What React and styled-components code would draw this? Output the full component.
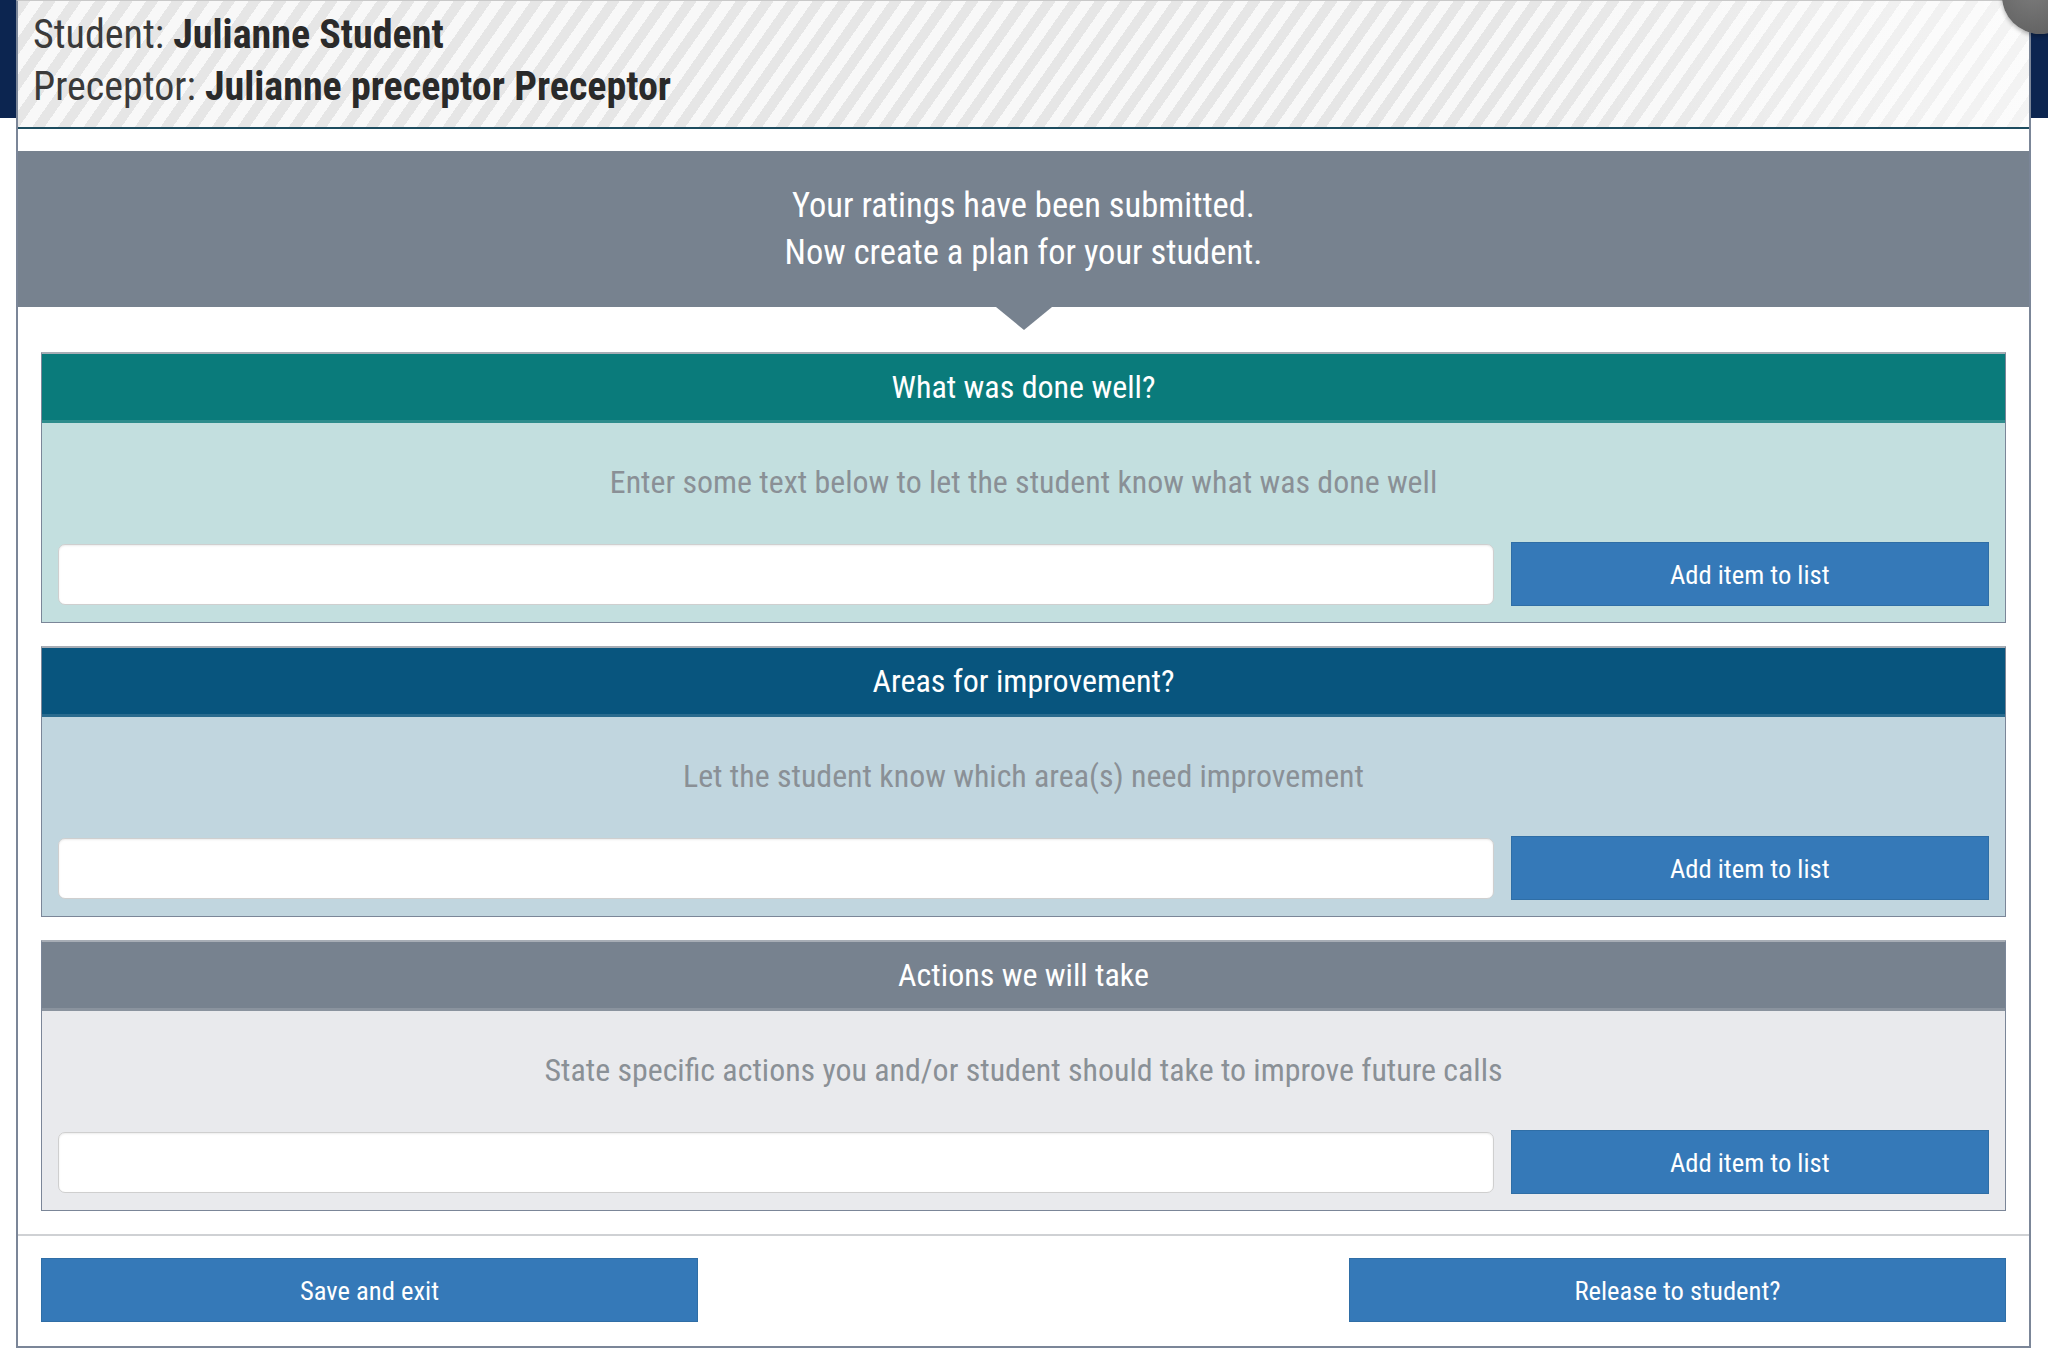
import styled, { createGlobalStyle } from "styled-components";

const GlobalStyle = createGlobalStyle`
  html, body {
    margin: 0;
    padding: 0;
  }
  body {
    min-height: 1348px;
    background: linear-gradient(#0c2550 0, #0c2550 118px, #ffffff 118px);
    font-family: "Roboto Condensed", "Liberation Sans Narrow", "DejaVu Sans Condensed", Roboto, sans-serif;
    font-stretch: condensed;
    overflow: hidden;
  }
`;

const Page = styled.div`
  position: relative;
  width: 2048px;
  height: 1348px;
  padding: 0 17px 0 16px;
  box-sizing: border-box;
`;

const CloseKnob = styled.div`
  position: absolute;
  top: -42px;
  right: -30px;
  width: 76px;
  height: 76px;
  border-radius: 50%;
  background: radial-gradient(circle at 40% 40%, #7c7c7c, #5a5a5a);
  box-shadow: 0 2px 4px rgba(0, 0, 0, 0.3);
`;

const Modal = styled.div`
  background: #fff;
  border: 2px solid #7b8698;
  border-top: 1px solid #c9c9c9;
  display: flex;
  flex-direction: column;
  height: 1348px;
  box-sizing: border-box;
`;

const Header = styled.div`
  height: 128px;
  box-sizing: border-box;
  padding: 8px 0 0 15px;
  border-bottom: 2px solid #1d4c5f;
  background:
    linear-gradient(to right, rgba(255, 255, 255, 0) 75%, rgba(255, 255, 255, 0.55) 100%),
    repeating-linear-gradient(
      125deg,
      #e6e6e6 0,
      #e6e6e6 10px,
      #f8f8f8 10px,
      #f8f8f8 21px
    );
  color: #3a3a3a;
  font-size: 40px;
  line-height: 52px;

  b {
    color: #2a2a2a;
    font-weight: 700;
  }
`;

const Body = styled.div`
  padding-top: 22px;
  display: flex;
  flex-direction: column;
`;

const Banner = styled.div`
  position: relative;
  height: 156px;
  background: #77828f;
  color: #fff;
  font-size: 34.5px;
  line-height: 47px;
  display: flex;
  flex-direction: column;
  align-items: center;
  justify-content: center;

  &::after {
    content: "";
    position: absolute;
    left: 50%;
    bottom: -23px;
    margin-left: -28px;
    border-left: 28px solid transparent;
    border-right: 28px solid transparent;
    border-top: 23px solid #77828f;
  }
`;

const Sections = styled.div`
  padding: 45px 23px 23px;
  display: flex;
  flex-direction: column;
  gap: 23px;
  border-bottom: 2px solid #cfd1d4;
`;

const Section = styled.section`
  border: 1px solid #7b8698;
  border-top: 2px solid #a7adb5;
  background: ${(p) => p.$bodyBg};
`;

const SectionTitle = styled.div`
  height: 69px;
  box-sizing: border-box;
  background: ${(p) => p.$bg};
  border-bottom: 3px solid ${(p) => p.$edge};
  color: #fff;
  font-size: 32px;
  display: flex;
  align-items: center;
  justify-content: center;
`;

const SectionBody = styled.div`
  padding: 37px 16px 16px;
  display: flex;
  flex-direction: column;
`;

const Hint = styled.div`
  text-align: center;
  color: #8a9096;
  font-size: 31.9px;
  line-height: 44px;
  margin-bottom: 38px;
`;

const InputRow = styled.div`
  display: grid;
  grid-template-columns: 3fr 1fr;
  gap: 17px;
  align-items: center;
`;

const TextInput = styled.input`
  height: 61px;
  box-sizing: border-box;
  border: 1px solid #cfcfcf;
  border-radius: 7px;
  background: #fff;
  box-shadow: inset 0 1px 2px rgba(0, 0, 0, 0.08);
  outline: none;
  font: inherit;
  padding: 0 16px;
`;

const BlueButton = styled.button`
  height: 64px;
  width: ${(p) => p.$width || "auto"};
  border: 1px solid #2f6ea6;
  background: #3579b8;
  color: #fff;
  font-family: inherit;
  font-stretch: condensed;
  font-size: 26.6px;
  cursor: pointer;
  padding: 0;
`;

const Footer = styled.div`
  padding: 22px 23px 0;
  display: flex;
  justify-content: space-between;
`;

const sections = [
  {
    title: "What was done well?",
    hint: "Enter some text below to let the student know what was done well",
    bg: "#0a7b7b",
    edge: "#2d8c8c",
    body: "#c3dfdf",
  },
  {
    title: "Areas for improvement?",
    hint: "Let the student know which area(s) need improvement",
    bg: "#08557e",
    edge: "#2a6b8e",
    body: "#c1d6df",
  },
  {
    title: "Actions we will take",
    hint: "State specific actions you and/or student should take to improve future calls",
    bg: "#77828f",
    edge: "#8a939e",
    body: "#e9eaed",
  },
];

const App = () => {
  return (
    <>
      <GlobalStyle />
      <Page>
        <CloseKnob />
        <Modal>
          <Header>
            <div>
              Student: <b>Julianne Student</b>
            </div>
            <div>
              Preceptor: <b>Julianne preceptor Preceptor</b>
            </div>
          </Header>

          <Body>
            <Banner>
              <div>Your ratings have been submitted.</div>
              <div>Now create a plan for your student.</div>
            </Banner>

            <Sections>
              {sections.map((s) => (
                <Section key={s.title} $bodyBg={s.body}>
                  <SectionTitle $bg={s.bg} $edge={s.edge}>
                    {s.title}
                  </SectionTitle>
                  <SectionBody>
                    <Hint>{s.hint}</Hint>
                    <InputRow>
                      <TextInput type="text" />
                      <BlueButton>Add item to list</BlueButton>
                    </InputRow>
                  </SectionBody>
                </Section>
              ))}
            </Sections>

            <Footer>
              <BlueButton $width="657px">Save and exit</BlueButton>
              <BlueButton $width="657px">Release to student?</BlueButton>
            </Footer>
          </Body>
        </Modal>
      </Page>
    </>
  );
};

export default App;
